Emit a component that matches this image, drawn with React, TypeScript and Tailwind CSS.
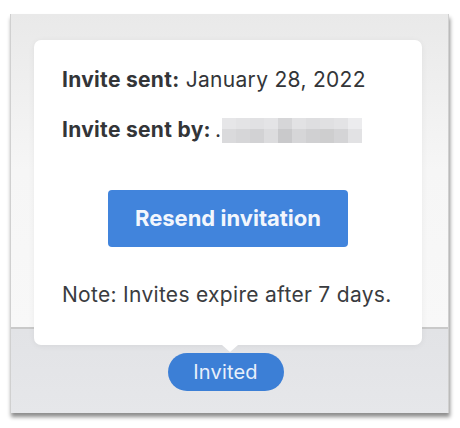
import React from "react";

const blocksTop = ["#e6e6e8", "#e3e3e5", "#e1e1e3", "#e4e4e6", "#d6d6d8", "#e2e2e4", "#dedee0", "#e0e0e2", "#e3e3e5", "#ececee"];
const blocksBottom = ["#dadadc", "#d6d6d8", "#d2d2d4", "#dcdcde", "#c9c9cb", "#d6d6d8", "#d0d0d2", "#cececf", "#d4d4d6", "#e2e2e4"];

export default function App() {
  return (
    <div className="w-[460px] h-[428px] bg-white pt-[14px] pl-[10px]" style={{ fontFamily: "Inter, 'Noto Sans', sans-serif" }}>
      <div className="relative w-[439px] shadow-[1px_4px_4px_rgba(0,0,0,0.45)] border-x border-[#d0d0d0]">
        <div className="h-[313px] bg-gradient-to-b from-[#e9e9e9] via-[#f6f6f6] to-[#f8f8f8]"></div>
        <div className="h-[2px] bg-[#c9c9c9]"></div>
        <div className="h-[84px] bg-gradient-to-b from-[#e2e3e6] to-[#e6e7ea] flex justify-center pt-[24px]">
          <div className="ml-[-8px] w-[116px] h-[38px] rounded-full bg-[#3c7fd6] text-[#e8f0fb] text-[20px] tracking-[0.2px] flex items-center justify-center">
            Invited
          </div>
        </div>

        <div className="absolute left-[23px] top-[26px] w-[388px] h-[305px] bg-white rounded-[7px] shadow-[0_1px_6px_rgba(0,0,0,0.06)] px-[28px] pt-[26px] text-[#333538]">
          <div className="text-[21px] leading-[28px] tracking-[0.3px]">
            <span className="font-bold">Invite sent:</span> January 28, 2022
          </div>
          <div className="mt-[22px] text-[21px] leading-[28px] tracking-[0.3px] flex items-center">
            <span className="font-bold">Invite sent by:</span>
            <span className="ml-[4px]">.</span>
            <div className="ml-[1px] flex flex-col">
              <div className="flex">
                {blocksTop.map((c, i) => (
                  <div key={i} className="w-[14px] h-[11px]" style={{ background: c }}></div>
                ))}
              </div>
              <div className="flex">
                {blocksBottom.map((c, i) => (
                  <div key={i} className="w-[14px] h-[14px]" style={{ background: c }}></div>
                ))}
              </div>
            </div>
          </div>
          <div className="mt-[46px] flex justify-center">
            <button className="w-[240px] h-[57px] rounded-[4px] bg-[#4184dc] text-[#f2f6fd] text-[22px] font-bold">
              Resend invitation
            </button>
          </div>
          <div className="mt-[34px] text-[21px] leading-[28px] tracking-[0.3px] text-[#3a3c40]">
            Note: Invites expire after 7 days.
          </div>
          <div className="absolute left-[188px] bottom-[-7px] w-0 h-0 border-x-[8px] border-x-transparent border-t-[7px] border-t-white"></div>
        </div>
      </div>
    </div>
  );
}
